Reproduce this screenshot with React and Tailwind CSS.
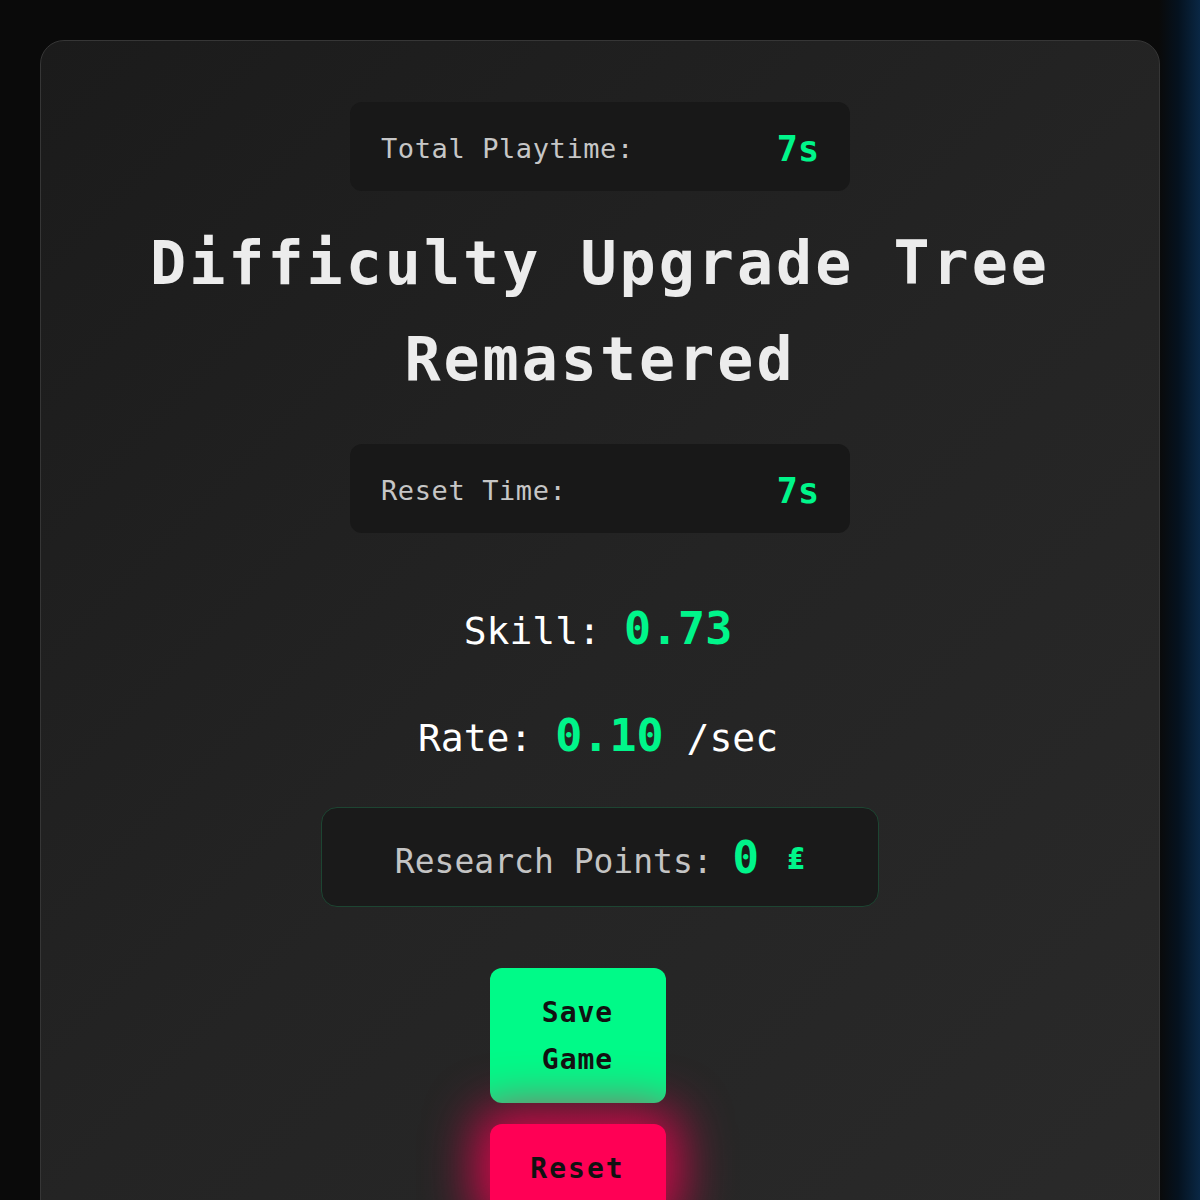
import React, { useState } from 'react';

const mono = "font-['DejaVu_Sans_Mono','Liberation_Mono',monospace]";

const StatBox = ({ label, value }) => (
  <div className="w-[500px] h-[89px] mx-auto flex items-center justify-between px-[31px] pt-[5px] rounded-xl bg-[#181818]">
    <span className="text-[27px] text-[#c6c6c6] tracking-[0.6px]">{label}</span>
    <span className="text-[35px] font-bold text-[#00f58a]">{value}</span>
  </div>
);

const App = () => {
  const [skill] = useState(0.73);
  const [rate] = useState(0.1);
  const [points] = useState(0);

  return (
    <div
      className={`min-h-screen p-10 bg-[linear-gradient(90deg,#0a0a0a_0%,#0a0a0a_96.6%,#05121f_98.2%,#0a2744_100%)] ${mono}`}
    >
      <div className="min-h-[1240px] rounded-[24px] border border-[#363636] bg-[linear-gradient(135deg,#1b1b1b_0%,#242424_50%,#2a2a2a_100%)] pt-[61px] pb-16 text-center">
        <StatBox label="Total Playtime:" value="7s" />

        <h1 className="mt-[24px] mx-auto max-w-[950px] text-[60px] leading-[96px] font-bold tracking-[3px] text-[#ececec]">
          Difficulty Upgrade Tree Remastered
        </h1>

        <div className="mt-[37px]">
          <StatBox label="Reset Time:" value="7s" />
        </div>

        <div className="mt-[69px] flex items-baseline justify-center text-[38px] leading-[1.2] text-white pr-[4px]">
          <span className="whitespace-pre">Skill: </span>
          <span className="text-[45px] font-bold text-[#00f58a]">{skill.toFixed(2)}</span>
        </div>

        <div className="mt-[53px] flex items-baseline justify-center text-[38px] leading-[1.2] text-white pr-[4px]">
          <span className="whitespace-pre">Rate: </span>
          <span className="text-[45px] font-bold text-[#00f58a]">{rate.toFixed(2)}</span>
          <span className="whitespace-pre"> /sec</span>
        </div>

        <div className="mt-[44px] mx-auto w-[558px] h-[100px] rounded-2xl border border-[#1d4532] bg-[#1a1a1a] flex items-baseline justify-center pt-[28px]">
          <span className="text-[33px] text-[#c4c4c4] whitespace-pre">Research Points: </span>
          <span className="text-[44px] font-bold text-[#00f58a] leading-none">{points}</span>
          <span className="ml-[28px] text-[30px] font-bold text-[#00f58a] relative -top-[4px]">₤</span>
        </div>

        <div className="mt-[61px] flex flex-col items-center gap-[21px] pr-[45px]">
          <button className="w-[176px] h-[135px] px-[24px] rounded-xl bg-[#00fa88] text-[28px] leading-[47px] font-bold tracking-[1px] text-[#111]">
            Save Game
          </button>
          <button className="w-[176px] h-[88px] px-[24px] rounded-xl bg-[#ff0055] text-[28px] leading-[47px] font-bold tracking-[2px] text-[#111] shadow-[0_0_50px_14px_rgba(255,0,85,0.8)]">
            Reset
          </button>
        </div>
      </div>
    </div>
  );
};

export default App;
